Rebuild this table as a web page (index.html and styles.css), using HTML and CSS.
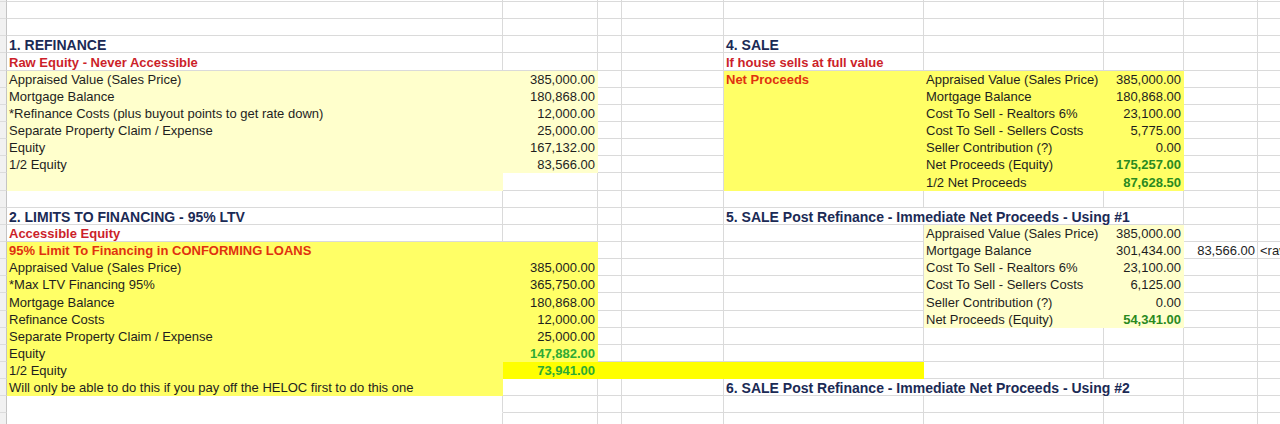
FILE: index.html
```html
<!DOCTYPE html>
<html lang="en">
<head>
<meta charset="utf-8">
<title>Refinance vs Sale</title>
<link rel="stylesheet" href="styles.css">
</head>
<body>
<div class="sheet">
<table class="grid">
<colgroup>
<col class="w-hdr"><col class="w-a"><col class="w-b"><col class="w-c"><col class="w-d"><col class="w-e"><col class="w-f"><col class="w-g"><col class="w-h"><col class="w-i">
</colgroup>
<tbody>
<tr class="edge"><td></td><td></td><td></td><td></td><td></td><td></td><td></td><td></td><td></td><td></td></tr>
<tr><td></td><td></td><td></td><td></td><td></td><td></td><td></td><td></td><td></td><td></td></tr>
<tr><td></td><td></td><td></td><td></td><td></td><td></td><td></td><td></td><td></td><td></td></tr>
<tr><td></td><td class="h">1. REFINANCE</td><td></td><td></td><td></td><td class="h">4. SALE</td><td></td><td></td><td></td><td></td></tr>
<tr><td></td><td class="red">Raw Equity - Never Accessible</td><td></td><td></td><td></td><td class="red">If house sells at full value</td><td></td><td></td><td></td><td></td></tr>
<tr><td></td><td class="ly">Appraised Value (Sales Price)</td><td class="ly num">385,000.00</td><td></td><td></td><td class="y org">Net Proceeds</td><td class="y">Appraised Value (Sales Price)</td><td class="y num">385,000.00</td><td></td><td></td></tr>
<tr><td></td><td class="ly">Mortgage Balance</td><td class="ly num">180,868.00</td><td></td><td></td><td class="y"></td><td class="y">Mortgage Balance</td><td class="y num">180,868.00</td><td></td><td></td></tr>
<tr><td></td><td class="ly">*Refinance Costs (plus buyout points to get rate down)</td><td class="ly num">12,000.00</td><td></td><td></td><td class="y"></td><td class="y">Cost To Sell - Realtors 6%</td><td class="y num">23,100.00</td><td></td><td></td></tr>
<tr><td></td><td class="ly">Separate Property Claim / Expense</td><td class="ly num">25,000.00</td><td></td><td></td><td class="y"></td><td class="y">Cost To Sell - Sellers Costs</td><td class="y num">5,775.00</td><td></td><td></td></tr>
<tr><td></td><td class="ly">Equity</td><td class="ly num">167,132.00</td><td></td><td></td><td class="y"></td><td class="y">Seller Contribution (?)</td><td class="y num">0.00</td><td></td><td></td></tr>
<tr><td></td><td class="ly">1/2 Equity</td><td class="ly num">83,566.00</td><td></td><td></td><td class="y"></td><td class="y">Net Proceeds (Equity)</td><td class="y num g-dark">175,257.00</td><td></td><td></td></tr>
<tr><td></td><td class="ly"></td><td></td><td></td><td></td><td class="y"></td><td class="y">1/2 Net Proceeds</td><td class="y num g-dark">87,628.50</td><td></td><td></td></tr>
<tr><td></td><td></td><td></td><td></td><td></td><td></td><td></td><td></td><td></td><td></td></tr>
<tr><td></td><td class="h">2. LIMITS TO FINANCING - 95% LTV</td><td></td><td></td><td></td><td class="h" colspan="3">5. SALE Post Refinance - Immediate Net Proceeds - Using #1</td><td></td><td></td></tr>
<tr><td></td><td class="red">Accessible Equity</td><td></td><td></td><td></td><td></td><td class="ly">Appraised Value (Sales Price)</td><td class="ly num">385,000.00</td><td></td><td></td></tr>
<tr><td></td><td class="y org">95% Limit To Financing in CONFORMING LOANS</td><td class="y"></td><td></td><td></td><td></td><td class="ly">Mortgage Balance</td><td class="ly num">301,434.00</td><td class="num">83,566.00</td><td class="clip">&lt;raw</td></tr>
<tr><td></td><td class="y">Appraised Value (Sales Price)</td><td class="y num">385,000.00</td><td></td><td></td><td></td><td class="ly">Cost To Sell - Realtors 6%</td><td class="ly num">23,100.00</td><td></td><td></td></tr>
<tr><td></td><td class="y">*Max LTV Financing 95%</td><td class="y num">365,750.00</td><td></td><td></td><td></td><td class="ly">Cost To Sell - Sellers Costs</td><td class="ly num">6,125.00</td><td></td><td></td></tr>
<tr><td></td><td class="y">Mortgage Balance</td><td class="y num">180,868.00</td><td></td><td></td><td></td><td class="ly">Seller Contribution (?)</td><td class="ly num">0.00</td><td></td><td></td></tr>
<tr><td></td><td class="y">Refinance Costs</td><td class="y num">12,000.00</td><td></td><td></td><td></td><td class="ly">Net Proceeds (Equity)</td><td class="ly num g-dark">54,341.00</td><td></td><td></td></tr>
<tr><td></td><td class="y">Separate Property Claim / Expense</td><td class="y num">25,000.00</td><td></td><td></td><td></td><td></td><td></td><td></td><td></td></tr>
<tr><td></td><td class="y">Equity</td><td class="y num g-light">147,882.00</td><td></td><td></td><td></td><td></td><td></td><td></td><td></td></tr>
<tr><td></td><td class="y">1/2 Equity</td><td class="by num g-light">73,941.00</td><td class="by"></td><td class="by"></td><td class="by"></td><td></td><td></td><td></td><td></td></tr>
<tr><td></td><td class="y">Will only be able to do this if you pay off the HELOC first to do this one</td><td></td><td></td><td></td><td class="h" colspan="3">6. SALE Post Refinance - Immediate Net Proceeds - Using #2</td><td></td><td></td></tr>
<tr><td></td><td class="blank"></td><td></td><td></td><td></td><td></td><td></td><td></td><td></td><td></td></tr>
<tr><td></td><td class="blank"></td><td></td><td></td><td></td><td></td><td></td><td></td><td></td><td></td></tr>
</tbody>
</table>
</div>
</body>
</html>
```
FILE: styles.css
```css
html, body {
  margin: 0;
  padding: 0;
  background: #ffffff;
  overflow: hidden;
}

.sheet {
  width: 1280px;
  height: 424px;
  overflow: hidden;
  background: #ffffff;
}

.grid {
  border-collapse: separate;
  border-spacing: 0;
  table-layout: fixed;
  width: 1358px;
  font-family: "Liberation Sans", Arial, sans-serif;
  font-size: 13px;
  color: #1e1e1e;
}

.w-hdr { width: 7px; }
.w-a { width: 496px; }
.w-b { width: 95px; }
.w-c { width: 24px; }
.w-d { width: 102px; }
.w-e { width: 200px; }
.w-f { width: 180px; }
.w-g { width: 80px; }
.w-h { width: 74px; }
.w-i { width: 100px; }

.grid tr {
  height: 17.15px;
}

.grid tr.edge {
  height: 2px;
}

.grid td {
  padding: 0 2px;
  border-right: 1px solid #dadada;
  border-bottom: 1px solid #dadada;
  line-height: 14px;
  vertical-align: bottom;
  white-space: nowrap;
  overflow: visible;
}

.grid tr.edge td {
  line-height: 0;
}

.grid td:first-child {
  padding: 0;
  background: #f1f1f1;
  border-right-color: #c4c4c4;
  border-bottom-color: #dcdcdc;
}

.grid td.clip {
  overflow: hidden;
  text-overflow: clip;
}

.num {
  text-align: right;
}

.h {
  font-size: 14px;
  font-weight: bold;
  color: #1b2a55;
}

.red {
  font-weight: bold;
  color: #cc1f2a;
}

.org {
  font-weight: bold;
  color: #e0320f;
}

.g-dark {
  font-weight: bold;
  color: #2a8a1f;
}

.g-light {
  font-weight: bold;
  color: #2eaa34;
}

.grid td.ly {
  background: #ffffcc;
  border-color: transparent;
}

.grid td.y {
  background: #ffff66;
  border-color: transparent;
}

.grid td.by {
  background: #ffff00;
  border-color: transparent;
}

.grid td.blank {
  border-bottom-color: transparent;
}
```
